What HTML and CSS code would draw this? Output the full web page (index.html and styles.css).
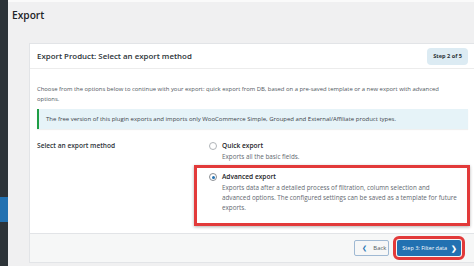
FILE: index.html
```html
<!DOCTYPE html>
<html lang="en">
<head>
	<meta charset="UTF-8">
	<title>Export</title>
	<link rel="stylesheet" href="styles.css">
</head>
<body>
	<div class="admin">
		<div class="sidebar">
			<div class="menu_active"></div>
		</div>
		<div class="main">
			<div class="topbar"></div>
			<h1 class="page_title">Export</h1>
			<div class="card">
				<div class="card_head">
					<h2>Export Product: Select an export method</h2>
					<span class="step_badge">Step 2 of 5</span>
				</div>
				<div class="card_body">
					<p class="intro">Choose from the options below to continue with your export: quick export from DB, based on a pre-saved template or a new export with advanced options.</p>
					<div class="notice">The free version of this plugin exports and imports only WooCommerce Simple, Grouped and External/Affiliate product types.</div>
					<div class="method_row">
						<div class="method_label">Select an export method</div>
						<div class="method_options">
							<label class="option">
								<span class="radio"></span>
								<span class="option_text">
									<strong>Quick export</strong>
									<span class="desc">Exports all the basic fields.</span>
								</span>
							</label>
							<label class="option option_marked">
								<span class="radio radio_on"></span>
								<span class="option_text">
									<strong>Advanced export</strong>
									<span class="desc desc_long">Exports data after a detailed process of filtration, column selection and<br>advanced options. The configured settings can be saved as a template for future<br>exports.</span>
								</span>
							</label>
						</div>
					</div>
				</div>
				<div class="card_foot">
					<a class="btn btn_back" href="#"><span class="chev">&#10094;</span> Back</a>
					<a class="btn btn_next" href="#">Step 3: Filter data <span class="chev">&#10095;</span></a>
				</div>
			</div>
		</div>
	</div>
</body>
</html>
```
FILE: styles.css
```css
*{
	margin:0;
	padding:0;
	box-sizing:border-box;
}

body{
	width:474px;
	height:266px;
	overflow:hidden;
	background-color:#f0f0f1;
	font-family:"Open Sans","Noto Sans",sans-serif;
	color:#1d2327;
}

.admin{
	display:flex;
	height:266px;
}

.sidebar{
	width:8px;
	flex-shrink:0;
	background-color:#2c3338;
	padding-top:197px;
}

.menu_active{
	height:25px;
	background-color:#2271b1;
}

.main{
	flex:1;
	display:flex;
	flex-direction:column;
	min-width:0;
}

.topbar{
	height:2px;
	background-color:#fafafa;
}

.page_title{
	font-size:10.2px;
	font-weight:600;
	line-height:26px;
	padding-left:4px;
	height:41px;
	color:#1d2327;
}

.card{
	margin-left:21px;
	background-color:#fff;
	border:1px solid #e2e4e7;
	border-right:none;
	width:446px;
}

.card_head{
	height:25px;
	display:flex;
	align-items:center;
	justify-content:space-between;
	padding:0 7px 0 7px;
	border-bottom:1px solid #ececec;
}

.card_head h2{
	font-size:7.9px;
	font-weight:600;
	color:#2c3338;
}

.step_badge{
	background-color:#dcebf3;
	border-radius:4px;
	font-size:5.6px;
	font-weight:700;
	color:#2c3338;
	padding:0 6px;
	line-height:17px;
}

.card_body{
	padding:16px 7px 0 7px;
	height:164px;
}

.intro{
	font-size:5.9px;
	line-height:9.5px;
	color:#50575e;
	padding-right:12px;
}

.notice{
	margin-top:5px;
	height:20px;
	background-color:#e6f3f8;
	border-left:2px solid #1e9e45;
	box-shadow:0 1px 1px rgba(0,0,0,0.06);
	font-size:6px;
	line-height:20px;
	color:#3c434a;
	padding-left:7px;
}

.method_row{
	display:flex;
	margin-top:11px;
}

.method_label{
	width:157px;
	flex-shrink:0;
	font-size:6.6px;
	font-weight:600;
	color:#2c3338;
	line-height:12px;
}

.method_options{
	flex:1;
	margin-right:-2px;
}

.option{
	display:flex;
	padding-left:15px;
}

.option_text{
	display:flex;
	flex-direction:column;
	font-size:6.3px;
	line-height:10px;
	color:#646970;
}

.option_text strong{
	font-weight:600;
	color:#1d2327;
	font-size:6.6px;
	line-height:12px;
}

.desc_long{
	white-space:nowrap;
}

.radio{
	width:8px;
	height:8px;
	border:1px solid #b0b4b8;
	border-radius:50%;
	margin:2px 5px 0 0;
	flex-shrink:0;
	background-color:#fff;
	position:relative;
}

.radio_on{
	border-color:#8c8f94;
}

.radio_on::after{
	content:"";
	position:absolute;
	left:1.5px;
	top:1.5px;
	width:3px;
	height:3px;
	border-radius:50%;
	background-color:#2271b1;
}

.option_marked{
	margin-top:3px;
	border:3px solid #e23a3a;
	padding:3px 2px 0 12px;
	height:61px;
	overflow:hidden;
	box-shadow:0 1px 3px rgba(0,0,0,0.3);
}

.card_foot{
	height:29px;
	background-color:#f6f7f7;
	border-top:1px solid #e2e4e7;
	display:flex;
	align-items:center;
	justify-content:flex-end;
	padding-right:14px;
	gap:8px;
}

.btn{
	display:flex;
	align-items:center;
	height:16px;
	font-size:5.9px;
	text-decoration:none;
	border-radius:2px;
	padding:0 7px;
	white-space:nowrap;
}

.btn_back{
	border:1px solid #9fb9d3;
	background-color:#f6f7f7;
	color:#50575e;
	width:35px;
	gap:6px;
}

.btn_back .chev{
	color:#2271b1;
	font-size:6px;
}

.btn_next{
	background-color:#2271b1;
	color:#fff;
	outline:3px solid #e23a3a;
	outline-offset:1px;
	gap:4px;
	padding:0 4px 0 5px;
	font-size:5.5px;
}

.btn_next .chev{
	font-size:7px;
	font-weight:700;
}
```
